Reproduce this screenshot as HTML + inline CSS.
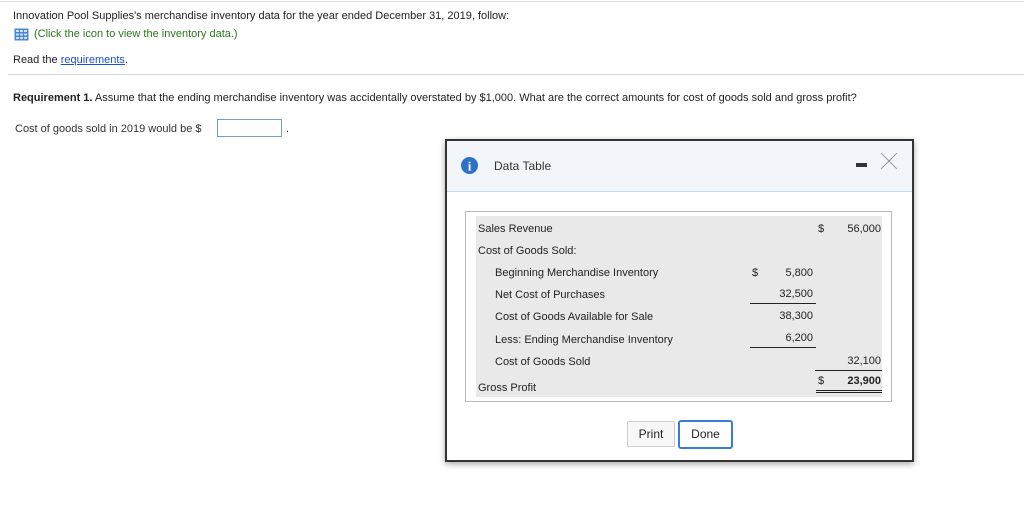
<!DOCTYPE html><html><head><style>
body{margin:0;width:1024px;height:508px;background:#fff;font-family:"Liberation Sans",Arial,sans-serif;font-size:11px;color:#222;position:relative;overflow:hidden}
.a{position:absolute;white-space:nowrap}
.r{text-align:right}
.ln{position:absolute;background:#222;height:1px}
</style></head><body>
<div style="position:absolute;left:0;top:1px;width:1024px;height:1px;background:#ddd"></div>
<div class="a" style="left:13px;top:10px">Innovation Pool Supplies's merchandise inventory data for the year ended December 31, 2019, follow:</div>
<svg class="a" style="left:14px;top:28px" width="15" height="13" viewBox="0 0 15 13"><rect x="0.5" y="0.5" width="14" height="12" fill="#4a86d6"/><g fill="#cfe0f7"><rect x="2" y="2" width="3" height="2"/><rect x="6" y="2" width="3" height="2"/><rect x="10" y="2" width="3" height="2"/><rect x="2" y="5.5" width="3" height="2"/><rect x="6" y="5.5" width="3" height="2"/><rect x="10" y="5.5" width="3" height="2"/><rect x="2" y="9" width="3" height="2"/><rect x="6" y="9" width="3" height="2"/><rect x="10" y="9" width="3" height="2"/></g></svg>
<div class="a" style="left:34px;top:28px;color:#2a7a1a">(Click the icon to view the inventory data.)</div>
<div class="a" style="left:13px;top:54px">Read the <span style="color:#1a4fd6;text-decoration:underline">requirements</span>.</div>
<div style="position:absolute;left:8px;top:74px;width:1016px;height:1px;background:#d5d8de"></div>
<div class="a" style="left:13px;top:92px"><b>Requirement 1.</b> Assume that the ending merchandise inventory was accidentally overstated by $1,000. What are the correct amounts for cost of goods sold and gross profit?</div>
<div class="a" style="left:15px;top:123px;color:#333">Cost of goods sold in 2019 would be $</div>
<div class="a" style="left:217px;top:119px;width:63px;height:16px;border:1px solid #7a9cc4"></div>
<div class="a" style="left:286px;top:123px">.</div>

<div class="a" style="left:445px;top:139px;width:465px;height:319px;border:2px solid #333;background:#fff;box-shadow:0 2px 6px rgba(0,0,0,.35)"></div>
<div class="a" style="left:447px;top:141px;width:465px;height:50px;background:#f2f5fa;border-bottom:1px solid #c8dcef"></div>
<svg class="a" style="left:461px;top:157px" width="17" height="17"><circle cx="8.5" cy="8.5" r="8.5" fill="#2d72c6"/><text x="8.5" y="13.5" text-anchor="middle" font-family="Liberation Serif" font-weight="bold" font-size="13" fill="#fff">i</text></svg>
<div class="a" style="left:494px;top:159px;font-size:12px;color:#333">Data Table</div>
<div class="a" style="left:856px;top:163px;width:11px;height:4px;background:#333"></div>
<svg class="a" style="left:880px;top:152px" width="18" height="18"><path d="M1 1L17 17M17 1L1 17" stroke="#888" stroke-width="0.8"/></svg>

<div class="a" style="left:465px;top:211px;width:425px;height:189px;border:1px solid #bbb"></div>
<div class="a" style="left:476px;top:216px;width:406px;height:181px;background:#e9e9e9"></div>
<div class="a" style="left:478px;top:223px">Sales Revenue</div>
<div class="a" style="left:818px;top:223px">$</div><div class="a r" style="left:830px;top:223px;width:51px">56,000</div>
<div class="a" style="left:478px;top:245px">Cost of Goods Sold:</div>
<div class="a" style="left:495px;top:267px">Beginning Merchandise Inventory</div>
<div class="a" style="left:752px;top:267px">$</div><div class="a r" style="left:762px;top:267px;width:51px">5,800</div>
<div class="a" style="left:495px;top:289px">Net Cost of Purchases</div>
<div class="a r" style="left:762px;top:288px;width:51px">32,500</div>
<div class="ln" style="left:750px;top:303px;width:66px"></div>
<div class="a" style="left:495px;top:311px">Cost of Goods Available for Sale</div>
<div class="a r" style="left:762px;top:310px;width:51px">38,300</div>
<div class="a" style="left:495px;top:334px">Less: Ending Merchandise Inventory</div>
<div class="a r" style="left:762px;top:332px;width:51px">6,200</div>
<div class="ln" style="left:750px;top:347px;width:66px"></div>
<div class="a" style="left:495px;top:356px">Cost of Goods Sold</div>
<div class="a r" style="left:830px;top:355px;width:51px">32,100</div>
<div class="ln" style="left:815px;top:370px;width:67px"></div>
<div class="a" style="left:818px;top:375px">$</div><div class="a r" style="left:830px;top:375px;width:51px"><b>23,900</b></div>
<div class="ln" style="left:816px;top:390px;width:66px"></div><div class="ln" style="left:816px;top:392px;width:66px"></div>
<div class="a" style="left:478px;top:382px">Gross Profit</div>

<div class="a" style="left:627px;top:421px;width:46px;height:24px;border:1px solid #ccc;border-radius:2px;background:#f7f7f7;text-align:center;line-height:24px;font-size:12px">Print</div>
<div class="a" style="left:678px;top:420px;border:2px solid #3a7bd5;border-radius:3px;background:#fff;text-align:center;font-size:12px;width:51px;height:25px;line-height:25px">Done</div>
</body></html>
